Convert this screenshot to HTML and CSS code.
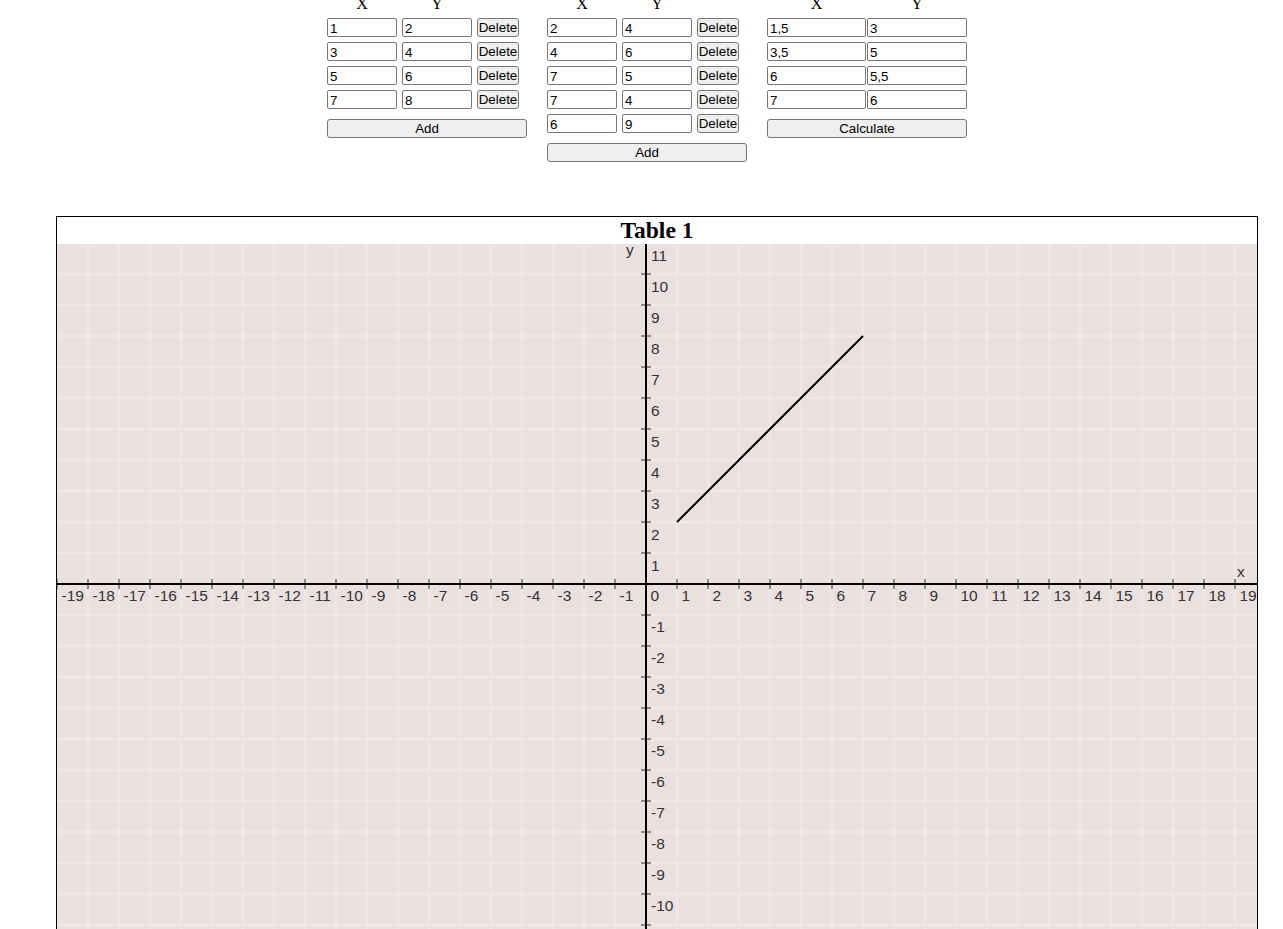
FILE: index.html
```html
<!DOCTYPE html>
<html lang="en">
<head>
<meta charset="utf-8">
<title>Tables</title>
<link rel="stylesheet" href="styles.css">
</head>
<body>
<div class="editors">
  <div class="table">
    <div class="grid grid-edit">
      <div class="head">X</div><div class="head">Y</div><div></div>
      <input class="cell" value="1"><input class="cell" value="2"><button class="btn del">Delete</button>
      <input class="cell" value="3"><input class="cell" value="4"><button class="btn del">Delete</button>
      <input class="cell" value="5"><input class="cell" value="6"><button class="btn del">Delete</button>
      <input class="cell" value="7"><input class="cell" value="8"><button class="btn del">Delete</button>
    </div>
    <button class="btn wide">Add</button>
  </div>
  <div class="table">
    <div class="grid grid-edit">
      <div class="head">X</div><div class="head">Y</div><div></div>
      <input class="cell" value="2"><input class="cell" value="4"><button class="btn del">Delete</button>
      <input class="cell" value="4"><input class="cell" value="6"><button class="btn del">Delete</button>
      <input class="cell" value="7"><input class="cell" value="5"><button class="btn del">Delete</button>
      <input class="cell" value="7"><input class="cell" value="4"><button class="btn del">Delete</button>
      <input class="cell" value="6"><input class="cell" value="9"><button class="btn del">Delete</button>
    </div>
    <button class="btn wide">Add</button>
  </div>
  <div class="table">
    <div class="grid grid-calc">
      <div class="head">X</div><div class="head">Y</div>
      <input class="cell" value="1,5"><input class="cell" value="3">
      <input class="cell" value="3,5"><input class="cell" value="5">
      <input class="cell" value="6"><input class="cell" value="5,5">
      <input class="cell" value="7"><input class="cell" value="6">
    </div>
    <button class="btn wide">Calculate</button>
  </div>
</div>

<div class="chart">
  <div class="chart-title">Table 1</div>
  <svg class="plot" width="1200" height="700" viewBox="0 0 1200 700">
    <defs>
      <pattern id="grid" x="-15.5" y="14.5" width="31" height="31" patternUnits="userSpaceOnUse">
        <path d="M15.5 0V31M0 15.5H31" stroke="#f2e9e9" stroke-width="1.8" fill="none"/>
      </pattern>
    </defs>
    <rect width="1200" height="700" fill="#ebe0e0"/>
    <rect width="1200" height="700" fill="url(#grid)"/>
    <line class="ticks" x1="0" y1="340" x2="1200" y2="340" stroke-dasharray="2 29" stroke-dashoffset="1"/>
    <line class="ticks" x1="589" y1="0" x2="589" y2="700" stroke-dasharray="2 29" stroke-dashoffset="2"/>
    <line class="axis" x1="0" y1="340" x2="1200" y2="340"/>
    <line class="axis" x1="589" y1="0" x2="589" y2="700"/>
    <polyline class="series" points="620,278 682,216 744,154 806,92"/>
    <g class="labels">
      <text x="1180" y="333">x</text>
      <text x="569" y="11">y</text>
      <text x="4.5" y="357">-19</text>
      <text x="35.5" y="357">-18</text>
      <text x="66.5" y="357">-17</text>
      <text x="97.5" y="357">-16</text>
      <text x="128.5" y="357">-15</text>
      <text x="159.5" y="357">-14</text>
      <text x="190.5" y="357">-13</text>
      <text x="221.5" y="357">-12</text>
      <text x="252.5" y="357">-11</text>
      <text x="283.5" y="357">-10</text>
      <text x="314.5" y="357">-9</text>
      <text x="345.5" y="357">-8</text>
      <text x="376.5" y="357">-7</text>
      <text x="407.5" y="357">-6</text>
      <text x="438.5" y="357">-5</text>
      <text x="469.5" y="357">-4</text>
      <text x="500.5" y="357">-3</text>
      <text x="531.5" y="357">-2</text>
      <text x="562.5" y="357">-1</text>
      <text x="593.5" y="357">0</text>
      <text x="624.5" y="357">1</text>
      <text x="655.5" y="357">2</text>
      <text x="686.5" y="357">3</text>
      <text x="717.5" y="357">4</text>
      <text x="748.5" y="357">5</text>
      <text x="779.5" y="357">6</text>
      <text x="810.5" y="357">7</text>
      <text x="841.5" y="357">8</text>
      <text x="872.5" y="357">9</text>
      <text x="903.5" y="357">10</text>
      <text x="934.5" y="357">11</text>
      <text x="965.5" y="357">12</text>
      <text x="996.5" y="357">13</text>
      <text x="1027.5" y="357">14</text>
      <text x="1058.5" y="357">15</text>
      <text x="1089.5" y="357">16</text>
      <text x="1120.5" y="357">17</text>
      <text x="1151.5" y="357">18</text>
      <text x="1182.5" y="357">19</text>
      <text x="594" y="17">11</text>
      <text x="594" y="48">10</text>
      <text x="594" y="79">9</text>
      <text x="594" y="110">8</text>
      <text x="594" y="141">7</text>
      <text x="594" y="172">6</text>
      <text x="594" y="203">5</text>
      <text x="594" y="234">4</text>
      <text x="594" y="265">3</text>
      <text x="594" y="296">2</text>
      <text x="594" y="327">1</text>
      <text x="594" y="388">-1</text>
      <text x="594" y="419">-2</text>
      <text x="594" y="450">-3</text>
      <text x="594" y="481">-4</text>
      <text x="594" y="512">-5</text>
      <text x="594" y="543">-6</text>
      <text x="594" y="574">-7</text>
      <text x="594" y="605">-8</text>
      <text x="594" y="636">-9</text>
      <text x="594" y="667">-10</text>
      <text x="594" y="698">-11</text>
    </g>
  </svg>
</div>
</body>
</html>
```

FILE: styles.css
```css
html, body {
  overflow: hidden;
}

body {
  margin: 0;
  font-family: "Liberation Serif", "Times New Roman", serif;
  background: #fff;
  color: #000;
}

.editors {
  display: flex;
  align-items: flex-start;
  gap: 20px;
  padding-left: 327px;
  margin-top: -5px;
}

.table {
  display: flex;
  flex-direction: column;
  width: 200px;
}

.grid {
  display: grid;
  row-gap: 5px;
}

.grid-edit {
  grid-template-columns: 70px 70px 42px;
  column-gap: 5px;
}

.grid-calc {
  grid-template-columns: 99px 100px;
  column-gap: 1px;
}

.head {
  height: 18px;
  line-height: 18px;
  font-size: 16px;
  text-align: center;
}

.cell {
  box-sizing: border-box;
  height: 19px;
  margin: 0;
  padding: 1px 2px 0;
  border: 1px solid #767676;
  border-radius: 2px;
  background: #fff;
  font-family: "Liberation Sans", Arial, sans-serif;
  font-size: 13.33px;
  color: #000;
}

.btn {
  box-sizing: border-box;
  height: 19px;
  margin: 0;
  padding: 1px 0 0;
  border: 1px solid #767676;
  border-radius: 3px;
  background: #efefef;
  font-family: "Liberation Sans", Arial, sans-serif;
  font-size: 13.33px;
  line-height: 16px;
  color: #000;
  text-align: center;
}

.del {
  width: 42px;
}

.wide {
  width: 200px;
  margin-top: 10px;
}

.chart {
  width: 1200px;
  margin: 54px 0 0 56px;
  border: 1px solid #000;
}

.chart-title {
  height: 27px;
  line-height: 27px;
  font-family: "Liberation Serif", "Times New Roman", serif;
  font-size: 23.5px;
  font-weight: bold;
  text-align: center;
  background: #fff;
}

.plot {
  display: block;
}

.ticks {
  stroke: #8a8a8a;
  stroke-width: 10;
}

.axis {
  stroke: #000;
  stroke-width: 2;
}

.series {
  fill: none;
  stroke: #000;
  stroke-width: 2;
}

.labels text {
  font-family: "Liberation Sans", Arial, sans-serif;
  font-size: 15.5px;
  fill: #333;
}
```
